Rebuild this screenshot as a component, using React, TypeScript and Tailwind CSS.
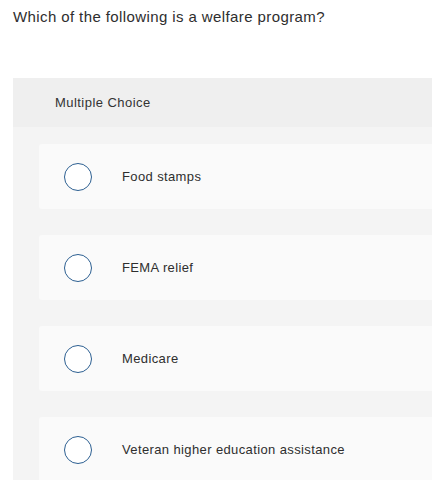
const options = [
  "Food stamps",
  "FEMA relief",
  "Medicare",
  "Veteran higher education assistance",
];

function Radio() {
  return (
    <span className="block w-[28px] h-[28px] rounded-full border-[1.5px] border-[#2c5f91] bg-white shrink-0" />
  );
}

export default function App() {
  return (
    <div
      className="w-[432px] h-[480px] overflow-hidden bg-white text-[#333]"
      style={{ fontFamily: '"Liberation Sans", Arial, sans-serif' }}
    >
      <p className="pl-[13px] pt-[7px] text-[15px] leading-[20px] tracking-[0.4px] text-[#2e2e2e]">
        Which of the following is a welfare program?
      </p>

      <div className="ml-[13px] mt-[51px]">
        <div className="h-[49px] bg-[#efefef] flex items-center pl-[42px] text-[13px] tracking-[0.45px]">
          Multiple Choice
        </div>
        <div className="bg-[#f4f4f4] pt-[17px] pl-[26px] flex flex-col gap-[26px]">
          {options.map((o) => (
            <div
              key={o}
              className="h-[65px] bg-[#fafafa] rounded-l-[3px] flex items-center pl-[25px]"
            >
              <Radio />
              <span className="ml-[30px] text-[13px] tracking-[0.38px] text-[#2e2e2e]">
                {o}
              </span>
            </div>
          ))}
        </div>
      </div>
    </div>
  );
}
